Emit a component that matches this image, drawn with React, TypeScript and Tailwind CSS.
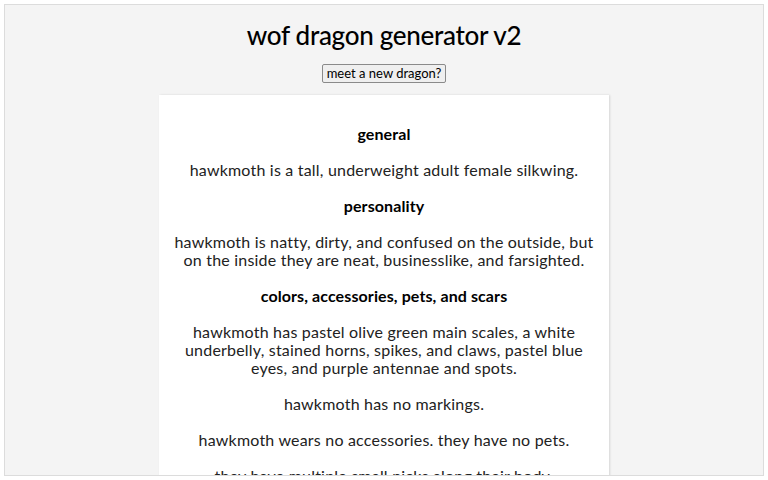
import React from "react";

const font = { fontFamily: "Lato, 'Open Sans', sans-serif" };

function Section({ title, children }: { title?: string; children: React.ReactNode }) {
  return (
    <>
      {title && (
        <h3 className="my-[18px] text-[16px] font-bold leading-[18px] tracking-[0.1px] text-black">{title}</h3>
      )}
      {children}
    </>
  );
}

function Para({ children }: { children: React.ReactNode }) {
  return <p className="my-[18px] text-[16px] leading-[18px] tracking-[0.2px] text-[#222]">{children}</p>;
}

export default function App() {
  return (
    <div className="min-h-[480px] bg-white p-[4px]" style={font}>
      <div className="h-[472px] overflow-hidden border border-[#dcdcdc] bg-[#f4f4f4] text-center">
        <h1 className="mt-[13px] text-[26px] font-medium leading-[34px] tracking-[-0.3px] text-black">
          wof dragon generator v2
        </h1>
        <button className="mt-[12px] h-[19px] rounded-[2px] border border-[#8a8a8a] bg-[#efefef] px-[4px] text-[13px] leading-[15px] text-black">
          meet a new dragon?
        </button>
        <div className="mx-auto mt-[11px] w-[450px] bg-white px-[8px] pt-[12px] pb-[20px] shadow-[1px_0_2px_rgba(0,0,0,0.12)]">
          <Section title="general">
            <Para>hawkmoth is a tall, underweight adult female silkwing.</Para>
          </Section>
          <Section title="personality">
            <Para>
              hawkmoth is natty, dirty, and confused on the outside, but
              <br />
              on the inside they are neat, businesslike, and farsighted.
            </Para>
          </Section>
          <Section title="colors, accessories, pets, and scars">
            <Para>
              hawkmoth has pastel olive green main scales, a white
              <br />
              underbelly, stained horns, spikes, and claws, pastel blue
              <br />
              eyes, and purple antennae and spots.
            </Para>
            <Para>hawkmoth has no markings.</Para>
            <Para>hawkmoth wears no accessories. they have no pets.</Para>
            <Para>they have multiple small nicks along their body.</Para>
          </Section>
        </div>
      </div>
    </div>
  );
}
